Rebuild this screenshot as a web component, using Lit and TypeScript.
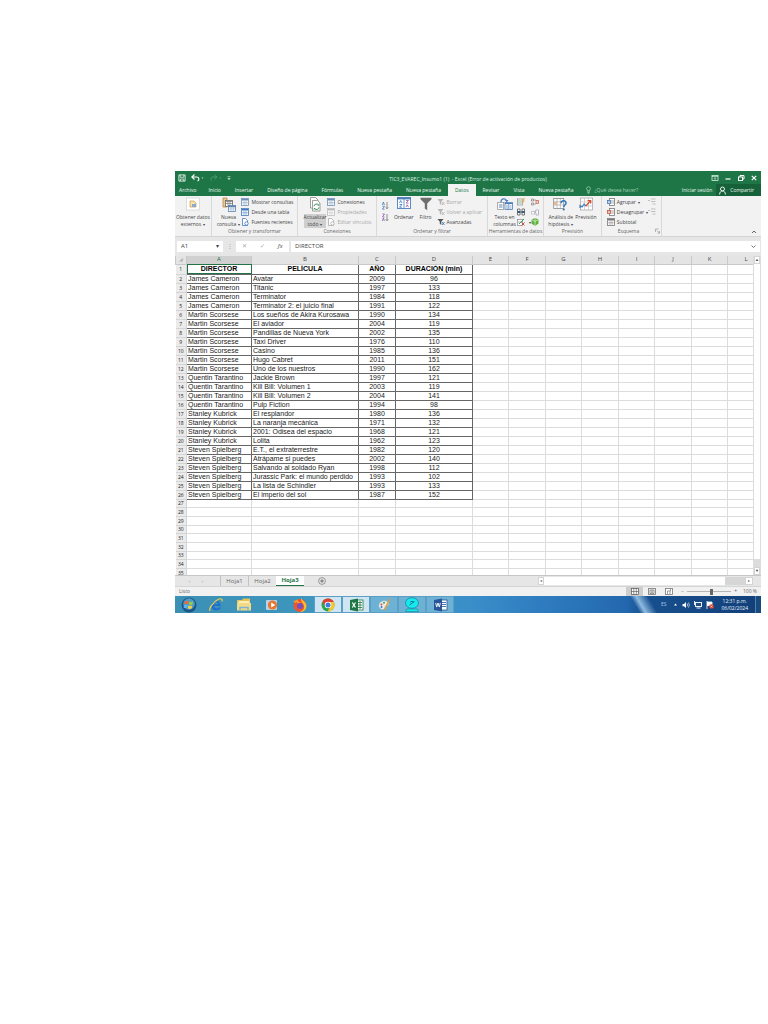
import { LitElement, html, svg, css, nothing } from "lit";
import { customElement } from "lit/decorators.js";
import { classMap } from "lit/directives/class-map.js";

type Film = [string, string, number, number];

const FILMS: Film[] = [
  ["James Cameron", "Avatar", 2009, 96],
  ["James Cameron", "Titanic", 1997, 133],
  ["James Cameron", "Terminator", 1984, 118],
  ["James Cameron", "Terminator 2: el juicio final", 1991, 122],
  ["Martin Scorsese", "Los sueños de Akira Kurosawa", 1990, 134],
  ["Martin Scorsese", "El aviador", 2004, 119],
  ["Martin Scorsese", "Pandillas de Nueva York", 2002, 135],
  ["Martin Scorsese", "Taxi Driver", 1976, 110],
  ["Martin Scorsese", "Casino", 1985, 136],
  ["Martin Scorsese", "Hugo Cabret", 2011, 151],
  ["Martin Scorsese", "Uno de los nuestros", 1990, 162],
  ["Quentin Tarantino", "Jackie Brown", 1997, 121],
  ["Quentin Tarantino", "Kill Bill: Volumen 1", 2003, 119],
  ["Quentin Tarantino", "Kill Bill: Volumen 2", 2004, 141],
  ["Quentin Tarantino", "Pulp Fiction", 1994, 98],
  ["Stanley Kubrick", "El resplandor", 1980, 136],
  ["Stanley Kubrick", "La naranja mecánica", 1971, 132],
  ["Stanley Kubrick", "2001: Odisea del espacio", 1968, 121],
  ["Stanley Kubrick", "Lolita", 1962, 123],
  ["Steven Spielberg", "E.T., el extraterrestre", 1982, 120],
  ["Steven Spielberg", "Atrápame si puedes", 2002, 140],
  ["Steven Spielberg", "Salvando al soldado Ryan", 1998, 112],
  ["Steven Spielberg", "Jurassic Park: el mundo perdido", 1993, 102],
  ["Steven Spielberg", "La lista de Schindler", 1993, 133],
  ["Steven Spielberg", "El imperio del sol", 1987, 152],
];

const COLUMNS = ["A", "B", "C", "D", "E", "F", "G", "H", "I", "J", "K", "L"];
const EXTRA = COLUMNS.slice(4);
const BLANK_ROWS = [27, 28, 29, 30, 31, 32, 33, 34, 35];

const icon = (w: number, h: number, body: unknown, cls = "") =>
  html`<svg class="ico ${cls}" width=${w} height=${h} viewBox="0 0 ${w} ${h}" aria-hidden="true">${body}</svg>`;

const sheetIcon = (c = "#6d8db5") => icon(8, 8, svg`
  <rect x=".5" y=".5" width="7" height="7" fill="#fff" stroke=${c} stroke-width=".8"/>
  <rect x="1" y="1" width="6" height="1.500" fill=${c}/>
  <path d="M1 4.800h6M3 3v4M5 3v4" stroke=${c} stroke-width=".5"/>`);
const pageIcon = (c = "#6d8db5") => icon(8, 8, svg`
  <path d="M1.500.5h3l2 2v5h-5z" fill="#fff" stroke=${c} stroke-width=".8"/>
  <circle cx="5.500" cy="5.500" r="1.700" fill="#fff" stroke=${c} stroke-width=".8"/>`);
const outlineIcon = (c: string) => icon(8, 8, svg`
  <rect x="2.500" y=".5" width="5" height="7" fill="#fff" stroke="#777" stroke-width=".8"/>
  <path d="M3 3h4M3 5h4" stroke="#888" stroke-width=".7"/>
  <rect x=".4" y="2.400" width="3" height="3" fill="#fff" stroke=${c} stroke-width=".8"/>
  <path d="M1 3.900h2" stroke=${c} stroke-width=".7"/>`);
const funnelSmall = (c: string, d: string) => icon(8, 8, svg`
  <path d="M.5 1h6L4.300 3.800v3L2.800 6V3.800z" fill=${c}/>
  <path d="M5 4l2.500 3M7.500 4L5 7" stroke=${d} stroke-width=".9"/>`);
const sortIcon = (down: boolean) => icon(7, 9, svg`
  <path d=${down ? "M.5 1h2L.5 4h2M.4 8l1-3 1 3" : "M.4 4l1-3 1 3M.5 5.2h2l-2 3h2"} fill="none" stroke=${down ? "#8a5bb0" : "#3d78bd"} stroke-width=".8"/>
  <path d="M5 1v6.500M3.800 6.300L5 7.800l1.200-1.500" fill="none" stroke="#666" stroke-width=".7"/>`);
const getDataIcon = icon(14, 14, svg`
  <rect x=".5" y="1" width="13" height="12" fill="#fff" stroke="#d0d0d0" stroke-width=".7"/>
  <path d="M4 4h4l2 2v4H4z" fill="#f7e3b0" stroke="#c79b42" stroke-width=".7"/>
  <path d="M6 7h4v3H6z" fill="#8ca9cc"/>`);
const newQueryIcon = icon(16, 16, svg`
  <path d="M2 1h4v9H2z" fill="#f0c893" stroke="#b77a35" stroke-width=".7"/>
  <rect x="4.500" y="3.500" width="7" height="6" fill="#fff" stroke="#666" stroke-width=".8"/>
  <path d="M4.500 4.500h7M4.500 6.500h7M7 4v5M9 4v5" stroke="#777" stroke-width=".7"/>
  <rect x="7.500" y="8.500" width="7" height="6" fill="#fff" stroke="#567fae" stroke-width=".8"/>
  <path d="M7.500 9.500h7" stroke="#567fae" stroke-width="1.500"/>
  <path d="M7.500 12h7M10 9v5M12.300 9v5" stroke="#8aa6c6" stroke-width=".6"/>`);
const refreshIcon = icon(16, 15, svg`
  <path d="M3.500.5h5l2.500 2.500v8h-7.500z" fill="#fff" stroke="#888" stroke-width=".8"/>
  <path d="M5.500 3.500h5L13 6v8H5.500z" fill="#fff" stroke="#888" stroke-width=".8"/>
  <path d="M7 9.200a2.500 2.500 0 0 1 4.500-1.200M12 10.300a2.500 2.500 0 0 1-4.500 1.200" fill="none" stroke="#39935f" stroke-width="1"/>
  <path d="M12.300 6.500v2h-2zM6.800 13v-2h2z" fill="#39935f"/>`);
const sortDialogIcon = icon(14, 12, svg`
  <rect x=".5" y=".5" width="13" height="11" fill="#fff" stroke="#4d7eb8" stroke-width=".9"/>
  <path d="M0 1.500h14" stroke="#4d7eb8" stroke-width="1.800"/><path d="M7 2v9.500" stroke="#4d7eb8" stroke-width=".8"/>
  <path d="M2.500 6l1.200-2.500L5 6M2.500 7.500H5l-2.500 2.700H5" fill="none" stroke="#3677c1" stroke-width=".8"/>
  <path d="M9 3.500h2.500L9 6h2.500M9 10.200l1.200-2.500 1.300 2.500" fill="none" stroke="#9956a4" stroke-width=".8"/>`);
const funnelIcon = icon(12, 14, svg`<path d="M.5.800h11v1.400L7.200 6.500v6.700l-2.400-1.600V6.500L.5 2.200z" fill="#6e6e6e"/>`);
const textColIcon = icon(16, 14, svg`
  <path d="M4 5C4 1.500 8 .8 9.500 3.500" fill="none" stroke="#4d7eb8" stroke-width="1.200"/><path d="M8 3h3.500L9.700 5.500z" fill="#4d7eb8"/>
  <rect x=".7" y="5.500" width="6" height="7" fill="#fff" stroke="#888" stroke-width=".7"/>
  <path d="M2 8h3.500M2 10h3.500" stroke="#5d87bb" stroke-width="1"/>
  <rect x="8" y="5.500" width="7.500" height="7" fill="#fff" stroke="#4d7eb8" stroke-width=".8"/>
  <path d="M8 6.500h7.500" stroke="#4d7eb8" stroke-width="1.200"/><path d="M11.700 6v6.500M9 9h2M12.500 9h2M9 11h2M12.500 11h2" stroke="#4d7eb8" stroke-width=".7"/>`);
const whatIfIcon = icon(15, 15, svg`
  <rect x=".7" y="1.500" width="10" height="10" fill="#fff" stroke="#888" stroke-width=".8"/>
  <path d="M.7 4.800h10M.7 8h10M4 1.500v10M7.300 1.500v10" stroke="#999" stroke-width=".6"/>
  <rect x="1.200" y="5.200" width="2.500" height="2.500" fill="#efaa70"/>
  <path d="M8 6.300c0-3.500 5.500-3 5 0-.2 1.500-2.200 1.500-2.200 3.800" fill="none" stroke="#2f75b9" stroke-width="1.500"/>
  <circle cx="10.800" cy="12.500" r="1.100" fill="#2f75b9"/>`);
const forecastIcon = icon(14, 14, svg`
  <rect x="1.500" y="1" width="12" height="12" fill="#fff" stroke="#aaa" stroke-width=".8"/>
  <path d="M1.500 5h12M1.500 9h12M5.500 1v12M9.500 1v12" stroke="#bbb" stroke-width=".6"/>
  <path d="M1 11V8.500l2 1.500 2-3 2 2" fill="none" stroke="#3677c1" stroke-width="1.100"/>
  <path d="M7 9l4.500-5.500M8.500 3.500h3.200v3" fill="none" stroke="#d4502e" stroke-width="1.200"/>`);
const flashFill = icon(8, 8, svg`<rect x=".5" y="1" width="5" height="6" fill="#fff" stroke="#888" stroke-width=".7"/><path d="M1 3h4M1 5h4" stroke="#6aa27c" stroke-width=".8"/><path d="M6.500 0L5 3h1.300L5 6l3-3.500H6.700L8 0z" fill="#eeb14c"/>`);
const dupes = icon(8, 8, svg`<path d="M.5 1h2.500v6H.5zM5 1h2.500v6H5z" fill="#fff" stroke="#555" stroke-width=".8"/><path d="M.5 3h2.500v2H.5zM5 3h2.500v2H5z" fill="#37587f"/><path d="M3 4h2" stroke="#555"/>`);
const validate = icon(8, 8, svg`<rect x=".5" y="1.500" width="5" height="6" fill="#fff" stroke="#888" stroke-width=".7"/><path d="M1 4h4" stroke="#888" stroke-width=".6"/><path d="M2 6l5-5" stroke="#3b995d" stroke-width="1"/><path d="M4.500 4.500l3 3M7.500 4.500l-3 3" stroke="#d2412d" stroke-width=".9"/>`);
const consolidate = icon(8, 8, svg`<path d="M.5 1h2v2h-2zM.5 5h2v2h-2z" fill="#fff" stroke="#777" stroke-width=".7"/><path d="M3 2h2M3 6h2" stroke="#777" stroke-width=".6"/><rect x="5" y="2.500" width="2.500" height="3" fill="#f5c9c0" stroke="#c9604e" stroke-width=".7"/>`);
const relations = icon(8, 8, svg`<rect x=".7" y="3.500" width="3" height="2.500" fill="#fff" stroke="#aaa" stroke-width=".6"/><path d="M3.700 4.500h1V2h2.800v5H5V4.500" fill="#fff" stroke="#9a9ab5" stroke-width=".7"/>`);
const dataModel = icon(8, 8, svg`<path d="M4 0l3.500 1.500v4L4 8 .5 5.500v-4z" fill="#5eaf3e"/><path d="M4 0v8M.5 1.500L4 3.500l3.500-2" stroke="#e4f6d6" stroke-width=".7" fill="none"/>`);
const detail = icon(8, 8, svg`<path d="M0 2.500h2M3 1h4.500M3 3.500h4.500M4.500 6h3" stroke="#b8b8b8" stroke-width=".9"/>`);
const dd = html`<span class="dd">▾</span>`;

@customElement("app-root")
export class AppRoot extends LitElement {
  static styles = css`
    :host { display: block; min-height: 100vh; box-sizing: border-box; padding: 171px 7px 0 175px; background: #fff;
      font-family: "Open Sans", "Noto Sans", sans-serif; font-size: 5px; line-height: 7px; color: #444; }
    * { box-sizing: border-box; }
    button, input { font: inherit; color: inherit; margin: 0; padding: 0; border: 0; background: none; border-radius: 0; outline: 0; }
    button { white-space: nowrap; }
    .ico { display: block; flex: none; }
    .window { display: flex; flex-direction: column; overflow: hidden; }
    .title { height: 13px; background: #1e7646; color: #d9eee1; display: grid; grid-template-columns: 1fr auto 1fr; align-items: center; padding: 0 3px; }
    .quick, .wincontrols { display: flex; align-items: center; gap: 5px; }
    .quick button, .wincontrols button { display: block; }
    .wincontrols { justify-content: flex-end; }
    .caption { padding-top: 3px; }
    .tabs { height: 12px; background: #1e7646; color: #eaf6ef; display: flex; align-items: stretch; }
    .tabs button { padding: 0 7px; }
    .tabs .first { padding: 0 5px 0 4px; }
    .tabs .active { background: #f3f3f3; color: #217346; }
    .tabs .tell { display: flex; align-items: center; gap: 3px; padding-left: 6px; color: #a5d3b8; }
    .tabs .signin { margin-left: auto; padding: 0 4px; }
    .tabs .share { background: #17613a; display: flex; align-items: center; gap: 4px; padding: 0 7px 0 3px; }
    .ribbon { height: 41px; background: #f2f2f2; border-bottom: 1px solid #d4d4d4; display: flex; }
    .group { display: grid; grid-template-rows: 32px 8px; border-right: 1px solid #d9d9d9; flex: none; }
    .group .label { text-align: center; color: #666; white-space: nowrap; }
    .g-ext { width: 37px; } .g-get { width: 86px; } .g-con { width: 79px; } .g-sort { width: 111px; }
    .g-tools { width: 56px; } .g-fore { width: 58px; } .g-out { width: 60px; }
    .row { display: flex; justify-content: center; min-width: 0; }
    .g-sort .row { gap: 4px; }
    .big { display: flex; flex-direction: column; align-items: center; justify-content: space-between; line-height: 7px; padding: 1px 1px 0; }
    .big .txt { height: 14px; display: block; text-align: center; }
    .pressed .txt { background: #cfcfcf; }
    .stack { display: grid; grid-template-rows: 10px 10px 10px; align-content: start; padding-top: 1px; }
    .stack button { display: flex; align-items: center; gap: 2px; text-align: left; }
    .sortcol { display: grid; grid-template-rows: 12px 12px; align-items: center; padding: 3px 0 0; }
    .sortcol button { display: block; }
    .dim { color: #a8a8a8; }
    .dd { font-size: 4px; padding-left: 2px; }
    .tail { flex: 1; display: flex; justify-content: flex-end; align-items: flex-end; padding: 0 4px 1px; }
    .launch { float: right; margin-right: 1px; }
    .formula { height: 19px; background: #e6e6e6; display: flex; align-items: center; gap: 2px; padding: 0 1px 0 2px; font-size: 6px; }
    .box { height: 11px; background: #fff; display: flex; align-items: center; }
    .namebox { width: 46px; padding: 0 4px; }
    .namebox input { width: 30px; flex: 1; }
    .sep { width: 9px; text-align: center; color: #999; }
    .fx { width: 53px; justify-content: space-around; color: #aaa; }
    .fx .on { color: #444; font-style: italic; }
    .fbar { flex: 1; padding: 0 4px; }
    .fbar input { flex: 1; min-width: 0; }
    .main { display: grid; grid-template-columns: minmax(0, 1fr) 8px; height: 319px; }
    .sheet { overflow: hidden; background: #fff; }
    table { border-collapse: collapse; table-layout: fixed; width: 587px; }
    .c-n { width: 11px; } .c-a { width: 65px; } .c-b { width: 107px; } .c-c { width: 37px; } .c-d { width: 77px; }
    .c-odd { width: 36px; } .c-even { width: 37px; }
    th, td { padding: 0; overflow: hidden; white-space: nowrap; line-height: 8px; height: 9px; }
    thead th { font-weight: 400; background: #e4e4e4; border: 1px solid #c9c9c9; border-top: 0; font-size: 6px; line-height: 7px; height: 8px; }
    thead .corner { color: #b5b5b5; font-size: 5px; }
    thead .sel { background: #d0d0d0; border-bottom-color: #217346; color: #217346; }
    tbody th.n { font-weight: 400; background: #ebebeb; border: 1px solid #d4d4d4; border-left: 0; font-size: 5px; text-align: center; color: #222; }
    tbody td { border: 1px solid #dcdcdc; }
    tbody .d { border: 1px solid #666; font-family: "Liberation Sans", Arial, sans-serif; font-size: 7px; color: #222; padding-left: 1px; }
    tbody .t { font-weight: 700; text-align: center; color: #000; padding: 0; }
    tbody .num { text-align: center; padding: 0; }
    .cur { outline: 1px solid #217346; outline-offset: -1px; }
    .firstrow > * { height: 10px; }
    .blank:nth-child(3n) > * { height: 8px; line-height: 7px; }
    .vscroll { background: #dcdcdc; display: grid; grid-template-rows: 8px 1fr 8px 8px; padding: 0 1px; }
    .vscroll button, .vthumb, .hscroll button { background: #fff; }
    .vscroll button, .hscroll button { font-size: 4px; line-height: 6px; border: 1px solid #d4d4d4; }
    .sheets { height: 11px; background: #e6e6e6; border-top: 1px solid #c6c6c6; display: flex; align-items: stretch; color: #666; }
    .sheets nav { display: flex; padding-left: 8px; font-size: 6px; }
    .nav { width: 13px; color: #aaa; }
    .tabbtns { display: flex; padding-left: 11px; }
    .sheets .tab { width: 28px; border-left: 1px solid #c2c2c2; }
    .sheets .cursheet { background: #fff; color: #217346; font-weight: 700; border-left: 0; border-bottom: 1px solid #217346; }
    .add { padding: 0 14px; }
    .hscroll { margin-left: auto; width: 38%; display: grid; grid-template-columns: 6px 1fr 20px 8px; padding: 1px 8px 3px 0; }
    .hthumb { background: #fff; } .htrack { background: #d6d6d6; }
    .status { height: 10px; background: #f1f1f1; border-top: 1px solid #d5d5d5; display: flex; align-items: center; padding: 0 4px; color: #666; }
    .views { margin-left: auto; display: flex; }
    .views button { width: 17px; height: 9px; display: grid; place-items: center; }
    .views .on { background: #cdcdcd; }
    .zoom { display: flex; align-items: center; gap: 3px; padding-left: 4px; }
    .zoom input { width: 44px; height: 7px; appearance: none; background: linear-gradient(#b5b5b5, #b5b5b5) center / 100% 1px no-repeat; }
    .zoom input::-webkit-slider-thumb { appearance: none; width: 3px; height: 6px; background: #666; }
    .pct { padding-left: 3px; }
    .taskbar { height: 17px; display: flex; align-items: stretch; color: #e8f2fb;
      background: linear-gradient(60deg, transparent 78%, #8fbbe0 79%, transparent 81%), linear-gradient(90deg, #3b90b4 0, #3f97c0 28%, #3a8fc9 50%, #2f7dc0 62%, #2368ae 77%, #17508f 80%, #123f78 100%); }
    .taskbar button { width: 28px; display: grid; place-items: center; }
    .taskbar .start { width: 27px; }
    .taskbar .open { border: 1px solid #5c9fc6; background: #6db2d4; }
    .taskbar .front { background: #cfe6f2; }
    .tray { margin-left: auto; display: flex; align-items: center; gap: 4px; }
    .lang { color: #a9c7e6; padding-right: 3px; }
    .clock { text-align: center; line-height: 7px; padding: 0 3px; white-space: nowrap; }
    .show { width: 6px; align-self: stretch; background: #174a7d; border-left: 1px solid #547fae; }
  `;

  private small(ico: unknown, text: string, dim = false, drop = false) {
    return html`<button class=${classMap({ dim })}>${ico}<span>${text}${drop ? dd : nothing}</span></button>`;
  }

  private titleBar() {
    return html`<header class="title">
      <div class="quick">
        <button aria-label="Guardar">${icon(8, 8, svg`<path d="M.9.900h6.200v6.200H.9z" fill="none" stroke="#e4f4ea" stroke-width=".9"/><path d="M2.200 1v2.300h3.600V1M2.300 7V5h3.400v2" fill="none" stroke="#e4f4ea" stroke-width=".8"/>`)}</button>
        <button aria-label="Deshacer">${icon(13, 8, svg`<path d="M3.500.5L.8 3l2.700 2.500M1 3h4.500C8.500 3 8.500 6.500 6.500 7" fill="none" stroke="#fff" stroke-width="1.100"/><path d="M10.500 3.500h2l-1 1.300z" fill="#cfe6d8"/>`)}</button>
        <button aria-label="Rehacer">${icon(13, 8, svg`<path d="M5.500 1L8 3 5.500 5.300M8 3H3.500C1.500 3 1.300 6 3 6.500" fill="none" stroke="#4e9970" stroke-width="1"/><path d="M10.500 3.500h2l-1 1.300z" fill="#5aa27b"/>`)}</button>
        <button aria-label="Personalizar">${icon(4, 8, svg`<path d="M.5 2.500h3M.8 4.200h2.400L2 5.700z" fill="#cfe6d8" stroke="#cfe6d8" stroke-width=".5"/>`)}</button>
      </div>
      <div class="caption">TIC3_EVAREC_Insumo1 (1) &nbsp;- Excel (Error de activación de productos)</div>
      <div class="wincontrols">
        <button aria-label="Opciones de la cinta">${icon(8, 8, svg`<rect x="1" y="1.500" width="6" height="5" fill="none" stroke="#d9eee1" stroke-width=".8"/><path d="M1 2.500h6M4 6V3.800M3 4.600l1-1 1 1" fill="none" stroke="#d9eee1" stroke-width=".7"/>`)}</button>
        <button aria-label="Minimizar">${icon(8, 8, svg`<path d="M1.500 5h5" stroke="#fff" stroke-width="1.200"/>`)}</button>
        <button aria-label="Restaurar">${icon(8, 8, svg`<path d="M3 3V1.500h4v3.500H5.500" fill="none" stroke="#fff"/><rect x="1.500" y="3" width="4" height="3.500" fill="none" stroke="#fff"/>`)}</button>
        <button aria-label="Cerrar">${icon(8, 8, svg`<path d="M1.800 1.800l4.400 4.400M6.200 1.800L1.800 6.200" stroke="#fff" stroke-width="1.200"/>`)}</button>
      </div>
    </header>`;
  }

  private tabBar() {
    const names = ["Inicio", "Insertar", "Diseño de página", "Fórmulas", "Nueva pestaña", "Nueva pestaña", "Datos", "Revisar", "Vista", "Nueva pestaña"];
    return html`<nav class="tabs">
      <button class="first">Archivo</button>
      ${names.map((n) => html`<button class=${classMap({ active: n === "Datos" })}>${n}</button>`)}
      <button class="tell">${icon(5, 8, svg`<circle cx="2.500" cy="2.700" r="1.900" fill="none" stroke="#a5d3b8" stroke-width=".7"/><path d="M1.700 4.500v2h1.600v-2M1.800 7.400h1.400" fill="none" stroke="#a5d3b8" stroke-width=".7"/>`)}¿Qué desea hacer?</button>
      <button class="signin">Iniciar sesión</button>
      <button class="share">${icon(7, 9, svg`<circle cx="3.500" cy="3" r="2" fill="none" stroke="#fff" stroke-width=".9"/><path d="M.6 8.500C.6 6 2 5 3.500 5s2.900 1 2.900 3.500" fill="none" stroke="#fff" stroke-width=".9"/>`)}Compartir</button>
    </nav>`;
  }

  private ribbon() {
    return html`<section class="ribbon">
      <div class="group g-ext"><div class="row">
        <button class="big">${getDataIcon}<span class="txt">Obtener datos<br>externos${dd}</span></button>
      </div></div>
      <div class="group g-get"><div class="row">
        <button class="big">${newQueryIcon}<span class="txt">Nueva<br>consulta${dd}</span></button>
        <div class="stack">
          ${this.small(sheetIcon("#6d8db5"), "Mostrar consultas")}
          ${this.small(sheetIcon("#4178bd"), "Desde una tabla")}
          ${this.small(pageIcon("#4178bd"), "Fuentes recientes")}
        </div></div><div class="label">Obtener y transformar</div></div>
      <div class="group g-con"><div class="row">
        <button class="big pressed">${refreshIcon}<span class="txt">Actualizar<br>todo${dd}</span></button>
        <div class="stack">
          ${this.small(sheetIcon("#6d8db5"), "Conexiones")}
          ${this.small(sheetIcon("#bbb"), "Propiedades", true)}
          ${this.small(pageIcon("#aaa"), "Editar vínculos", true)}
        </div></div><div class="label">Conexiones</div></div>
      <div class="group g-sort"><div class="row">
        <div class="sortcol"><button aria-label="Ordenar de A a Z">${sortIcon(false)}</button><button aria-label="Ordenar de Z a A">${sortIcon(true)}</button></div>
        <button class="big">${sortDialogIcon}<span class="txt">Ordenar</span></button>
        <button class="big">${funnelIcon}<span class="txt">Filtro</span></button>
        <div class="stack">
          ${this.small(funnelSmall("#b5b5b5", "#c5b0b0"), "Borrar", true)}
          ${this.small(funnelSmall("#b5b5b5", "#b5b5b5"), "Volver a aplicar", true)}
          ${this.small(funnelSmall("#555", "#4178bd"), "Avanzadas")}
        </div></div><div class="label">Ordenar y filtrar</div></div>
      <div class="group g-tools"><div class="row">
        <button class="big">${textColIcon}<span class="txt">Texto en<br>columnas</span></button>
        <div class="stack">
          <button aria-label="Relleno rápido">${flashFill}</button><button aria-label="Quitar duplicados">${dupes}</button><button aria-label="Validación de datos">${validate}${dd}</button>
        </div>
        <div class="stack">
          <button aria-label="Consolidar">${consolidate}</button><button aria-label="Relaciones">${relations}</button><button aria-label="Modelo de datos">${dataModel}</button>
        </div></div><div class="label">Herramientas de datos</div></div>
      <div class="group g-fore"><div class="row">
        <button class="big">${whatIfIcon}<span class="txt">Análisis de<br>hipótesis${dd}</span></button>
        <button class="big">${forecastIcon}<span class="txt">Previsión</span></button>
      </div><div class="label">Previsión</div></div>
      <div class="group g-out"><div class="row">
        <div class="stack">
          ${this.small(outlineIcon("#4178bd"), "Agrupar", false, true)}
          ${this.small(outlineIcon("#c8503c"), "Desagrupar", false, true)}
          ${this.small(sheetIcon("#777"), "Subtotal")}
        </div>
        <div class="stack"><button aria-label="Mostrar detalle">${detail}</button><button aria-label="Ocultar detalle">${detail}</button></div>
      </div><div class="label">Esquema<button class="launch" aria-label="Más opciones">${icon(5, 6, svg`<path d="M.5 4V1h3M2 2.500l2.500 2.500M4.500 3v2.200H2.500" fill="none" stroke="#888" stroke-width=".6"/>`)}</button></div></div>
      <div class="tail"><button aria-label="Contraer la cinta">${icon(6, 6, svg`<path d="M1 4l2-2 2 2" fill="none" stroke="#555" stroke-width=".9"/>`)}</button></div>
    </section>`;
  }

  private grid() {
    const extra = EXTRA.map(() => html`<td></td>`);
    return html`<table>
      <colgroup><col class="c-n"><col class="c-a"><col class="c-b"><col class="c-c"><col class="c-d">
        ${EXTRA.map((_, i) => html`<col class=${i % 2 ? "c-even" : "c-odd"}>`)}</colgroup>
      <thead><tr><th class="corner">◢</th>${COLUMNS.map((c) => html`<th class=${classMap({ sel: c === "A" })}>${c}</th>`)}</tr></thead>
      <tbody>
        <tr class="firstrow"><th class="n">1</th><td class="d t cur">DIRECTOR</td><td class="d t">PELÍCULA</td><td class="d t">AÑO</td><td class="d t">DURACIÓN (min)</td>${extra}</tr>
        ${FILMS.map((f, i) => html`<tr><th class="n">${i + 2}</th><td class="d">${f[0]}</td><td class="d">${f[1]}</td><td class="d num">${f[2]}</td><td class="d num">${f[3]}</td>${extra}</tr>`)}
        ${BLANK_ROWS.map((n) => html`<tr class="blank"><th class="n">${n}</th>${COLUMNS.map(() => html`<td></td>`)}</tr>`)}
      </tbody></table>`;
  }

  private taskbar() {
    return html`<footer class="taskbar">
      <button class="start" aria-label="Inicio">${icon(16, 16, svg`<circle cx="8" cy="8" r="7.500" fill="#1c5688"/><circle cx="8" cy="7" r="5.800" fill="#4f9ac6"/><path d="M4 4.500c1.500-1 2.500-.8 3.600-.2L7 7.300c-1.200-.6-2.300-.6-3.600.2z" fill="#ee6a35"/><path d="M8.300 4.600c1.300.6 2.300.6 3.800-.2l-.7 3c-1.500.7-2.500.6-3.700 0z" fill="#9acb45"/><path d="M3.200 8.200c1.400-.8 2.400-.7 3.600-.1l-.7 3c-1.200-.6-2.200-.7-3.600.1z" fill="#56b8ee"/><path d="M7.500 8.400c1.300.7 2.400.6 3.700 0l-.7 3c-1.300.7-2.400.6-3.700 0z" fill="#f8d247"/>`)}</button>
      <button aria-label="Internet Explorer">${icon(16, 16, svg`<path d="M12.500 9H6c.3 3 4 3 5 1.200l2 .4C11 15 3.300 14 3.500 8.500 3.700 2.500 13 2 12.500 9zM6.200 7.200h4c-.4-2.700-3.700-2.600-4 0z" fill="#1d6fd0"/><path d="M2 14c-1.500-2 3-9 8-11.500 3-1.500 5-.7 4 2" fill="none" stroke="#f2cd4d" stroke-width="1.200"/>`)}</button>
      <button aria-label="Explorador">${icon(16, 15, svg`<path d="M1 3h5l1-1.500h7V13H1z" fill="#e6c25c"/><path d="M2.500 4h11v8h-11z" fill="#f9eeb5"/><path d="M1 6h14v7.500H1z" fill="#f3db83"/><path d="M4 13.500v-3h8v3" fill="none" stroke="#7bb2d8" stroke-width="1.400"/>`)}</button>
      <button aria-label="Reproductor multimedia">${icon(14, 14, svg`<rect x="1" y="2" width="11" height="10" rx="1" fill="#b8d4e6"/><circle cx="7.500" cy="7" r="4.600" fill="#e87730"/><path d="M6.200 4.500v5l4-2.500z" fill="#fff"/>`)}</button>
      <button aria-label="Firefox">${icon(16, 16, svg`<circle cx="8" cy="8.500" r="6.500" fill="#f0532d"/><path d="M9 1c1 3 6 4 5.400 8.500C14 13.500 11 15 8 15c4-1.500 5-4.500 3.500-7.500C10.500 5.500 8.500 4 9 1z" fill="#fbc02e"/><path d="M2 4l1.500 1L5 3.500 6 5.500l3 1" fill="none" stroke="#fb9b2c" stroke-width="1.600"/><circle cx="8" cy="9" r="3" fill="#7351bd"/>`)}</button>
      <button class="open front" aria-label="Chrome">${icon(14, 14, svg`<circle cx="7" cy="7" r="6.500" fill="#2ea24c"/><path d="M1.400 3.700A6.500 6.500 0 0 1 12.800 4H7L4 8z" fill="#e13f33"/><path d="M12.800 4A6.500 6.500 0 0 1 6.500 13.500L9.700 8.500 8 4z" fill="#f8c62c"/><circle cx="7" cy="7" r="3.300" fill="#fff"/><circle cx="7" cy="7" r="2.500" fill="#3c7de0"/>`)}</button>
      <button class="open front" aria-label="Excel">${icon(15, 14, svg`<rect x="7" y="2" width="7" height="10" fill="#fff" stroke="#1e7646" stroke-width=".8"/><path d="M8 4.500h5M8 7h5M8 9.500h5M11 3v8" stroke="#1e7646" stroke-width=".8"/><path d="M1 2l8-1.500v13L1 12z" fill="#1e7646"/><path d="M3.300 4.500l3.200 5M6.500 4.500l-3.200 5" stroke="#fff" stroke-width="1.200"/>`)}</button>
      <button class="open" aria-label="Paint">${icon(14, 14, svg`<path d="M2 9C1 4 6 2 9 3s3.500 4 1.500 4.500S9.500 10 8 11 2.500 11.500 2 9z" fill="#e6edf0" stroke="#94b5c5" stroke-width=".5"/><circle cx="4.500" cy="6.500" r="1" fill="#df4e3a"/><circle cx="7" cy="4.800" r="1" fill="#4aa545"/><circle cx="4.500" cy="9" r="1" fill="#3a74cf"/><path d="M13 1L7 12" stroke="#e99a36" stroke-width="1.500"/>`)}</button>
      <button class="open" aria-label="Cámara web">${icon(16, 15, svg`<ellipse cx="8" cy="6" rx="6.500" ry="5.300" fill="#16eaf0" stroke="#0d7f90" stroke-width=".7"/><path d="M2.500 12h11l1 2.500h-13z" fill="#16eaf0" stroke="#0d7f90" stroke-width=".6"/><path d="M5.500 8l5-3.500M6 5.500c1-1.500 3-1.500 4 0" fill="none" stroke="#0d6170" stroke-width=".8"/>`)}</button>
      <button class="open" aria-label="Word">${icon(15, 14, svg`<rect x="7" y="2" width="7" height="10" fill="#fff" stroke="#2a5699" stroke-width=".8"/><path d="M9 4.500h4M9 6.500h4M9 8.500h4" stroke="#2a5699" stroke-width=".8"/><path d="M1 2l8-1.500v13L1 12z" fill="#2a5699"/><path d="M2.700 5l1 4 1.300-4 1.300 4 1-4" fill="none" stroke="#fff" stroke-width=".9"/>`)}</button>
      <div class="tray">
        <span class="lang">ES</span>
        ${icon(5, 5, svg`<path d="M1 3.500l1.500-2 1.500 2z" fill="#fff"/>`)}
        ${icon(8, 8, svg`<path d="M.5 3h1.500l2-2v6L2 5.200H.5z" fill="#fff"/><path d="M5.200 2.500q1 1.500 0 3M6.500 1.500q1.700 2.500 0 5" fill="none" stroke="#dce9f5" stroke-width=".7"/>`)}
        ${icon(8, 8, svg`<rect x="1.500" y="1.500" width="6" height="4" fill="#234f80" stroke="#fff" stroke-width=".9"/><path d="M.5 0v4M2.500 7h4" stroke="#fff" stroke-width=".9"/>`)}
        ${icon(8, 8, svg`<path d="M1 0v8M1 1h5v3.500H1" fill="#fff" stroke="#fff" stroke-width=".8"/><circle cx="5.500" cy="5.500" r="2.300" fill="#e0432f"/><path d="M4.600 4.600l1.800 1.800M6.400 4.600L4.600 6.400" stroke="#fff" stroke-width=".6"/>`)}
        <time class="clock">12:31 p.m.<br>06/02/2024</time>
        <span class="show"></span>
      </div>
    </footer>`;
  }

  render() {
    return html`<main class="window">
      ${this.titleBar()}${this.tabBar()}${this.ribbon()}
      <section class="formula">
        <div class="box namebox"><input aria-label="Cuadro de nombres" value="A1"><button aria-label="Nombres">▾</button></div>
        <span class="sep">⋮</span>
        <div class="box fx"><button aria-label="Cancelar">✕</button><button aria-label="Introducir">✓</button><button class="on" aria-label="Insertar función">fx</button></div>
        <div class="box fbar"><input aria-label="Barra de fórmulas" value="DIRECTOR"><button aria-label="Expandir">${icon(5, 5, svg`<path d="M.5 1.500l2 2 2-2" fill="none" stroke="#555" stroke-width=".8"/>`)}</button></div>
      </section>
      <section class="main">
        <div class="sheet">${this.grid()}</div>
        <div class="vscroll"><button aria-label="Subir">▲</button><div class="vthumb"></div><span></span><button aria-label="Bajar">▼</button></div>
      </section>
      <section class="sheets">
        <nav><button class="nav" aria-label="Hoja anterior">‹</button><button class="nav" aria-label="Hoja siguiente">›</button>
          <div class="tabbtns"><button class="tab">Hoja1</button><button class="tab">Hoja2</button><button class="tab cursheet">Hoja3</button></div></nav>
        <button class="add" aria-label="Hoja nueva">${icon(8, 8, svg`<circle cx="4" cy="4" r="3.400" fill="none" stroke="#777" stroke-width=".7"/><path d="M4 2.200v3.600M2.200 4h3.600" stroke="#555" stroke-width=".8"/>`)}</button>
        <div class="hscroll"><button aria-label="Izquierda">◂</button><div class="hthumb"></div><div class="htrack"></div><button aria-label="Derecha">▸</button></div>
      </section>
      <section class="status"><span>Listo</span>
        <div class="views">
          <button class="on" aria-label="Normal">${icon(8, 7, svg`<rect x=".5" y=".5" width="7" height="6" fill="#fff" stroke="#666" stroke-width=".8"/><path d="M0 3.500h8M2.800 0v7M5.300 0v7" stroke="#666" stroke-width=".7"/>`)}</button>
          <button aria-label="Diseño de página">${icon(8, 7, svg`<rect x=".5" y=".5" width="7" height="6" fill="none" stroke="#777" stroke-width=".8"/><path d="M2 2h4v3.500H2zM3 3h2M3 4.300h2" fill="none" stroke="#777" stroke-width=".7"/>`)}</button>
          <button aria-label="Vista previa de salto de página">${icon(8, 7, svg`<rect x=".5" y=".5" width="7" height="6" fill="#fff" stroke="#777" stroke-width=".8"/><path d="M2.500 6V3h3V.5M5 6V3" fill="none" stroke="#777" stroke-width=".7"/>`)}</button>
        </div>
        <div class="zoom"><button aria-label="Alejar">−</button><input type="range" aria-label="Zoom" min="0" max="200" value="110"><button aria-label="Acercar">+</button><span class="pct">100 %</span></div>
      </section>
      ${this.taskbar()}
    </main>`;
  }
}
